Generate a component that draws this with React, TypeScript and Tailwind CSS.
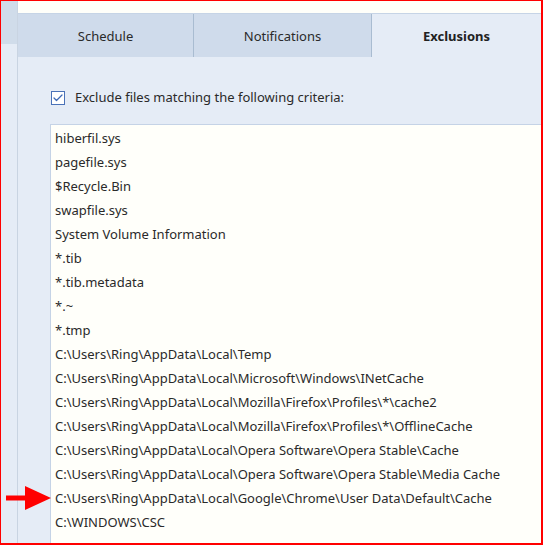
import { Check } from 'lucide-react'

const exclusions = [
  'hiberfil.sys',
  'pagefile.sys',
  '$Recycle.Bin',
  'swapfile.sys',
  'System Volume Information',
  '*.tib',
  '*.tib.metadata',
  '*.~',
  '*.tmp',
  'C:\\Users\\Ring\\AppData\\Local\\Temp',
  'C:\\Users\\Ring\\AppData\\Local\\Microsoft\\Windows\\INetCache',
  'C:\\Users\\Ring\\AppData\\Local\\Mozilla\\Firefox\\Profiles\\*\\cache2',
  'C:\\Users\\Ring\\AppData\\Local\\Mozilla\\Firefox\\Profiles\\*\\OfflineCache',
  'C:\\Users\\Ring\\AppData\\Local\\Opera Software\\Opera Stable\\Cache',
  'C:\\Users\\Ring\\AppData\\Local\\Opera Software\\Opera Stable\\Media Cache',
  'C:\\Users\\Ring\\AppData\\Local\\Google\\Chrome\\User Data\\Default\\Cache',
  'C:\\WINDOWS\\CSC',
]

const tabs = [
  { id: 'schedule', label: 'Schedule', width: 'w-[175px]' },
  { id: 'notifications', label: 'Notifications', width: 'w-[178px]' },
  { id: 'exclusions', label: 'Exclusions', width: 'flex-1', active: true },
]

function RedArrow() {
  return (
    <svg width="46" height="24" viewBox="0 0 46 24" className="absolute left-[5px] top-[485px]">
      <polygon points="0,9.5 19,9.5 19,0 45,12 19,24 19,14.5 0,14.5" fill="#ff0000" />
    </svg>
  )
}

export default function App() {
  return (
    <div
      className="relative w-[543px] h-[545px] overflow-hidden border-l border-t border-r-2 border-b-2 border-[#ff0000] flex bg-[#e5ecf6] text-[#2a2a2a]"
      style={{ fontFamily: '"Noto Sans", "Open Sans", sans-serif' }}
    >
      {/* left rail */}
      <div className="w-[17px] flex-shrink-0 flex flex-col border-r border-[#c9d4e2]">
        <div className="h-[43px] bg-[#d0dcea]" />
        <div className="flex-1 bg-[#e5ecf6]" />
      </div>

      <div className="flex-1 flex flex-col min-w-0">
        <div className="h-[12px] bg-[#fffffa]" />

        {/* tabs */}
        <div className="h-[44px] flex border-t border-[#c6d4e6]">
          {tabs.map((tab, i) => (
            <div
              key={tab.id}
              className={`${tab.width} flex items-center justify-center pt-[2px] text-[13px] ${
                tab.active ? 'bg-[#e5ecf6] font-bold text-[#222]' : 'bg-[#cfdbeb]'
              } ${i > 0 ? 'border-l border-[#a9bcd1]' : ''}`}
            >
              {tab.label}
            </div>
          ))}
        </div>

        {/* exclusions panel */}
        <div className="flex-1 flex flex-col pl-[32px] pt-[31px] min-h-0">
          <label className="flex items-center gap-[10px] pl-[1px] text-[13px]">
            <span className="w-[14px] h-[14px] border border-[#4a72b8] bg-white flex items-center justify-center">
              <Check className="w-[12px] h-[12px] text-[#3d69b5]" strokeWidth={2.5} />
            </span>
            Exclude files matching the following criteria:
          </label>

          <div className="mt-[16px] flex-1 border-l border-t border-[#c5d3e6] bg-[#fffffa] pt-[2px] pl-[4px]">
            {exclusions.map((item) => (
              <div key={item} className="h-[24px] flex items-center text-[13px] whitespace-nowrap">
                {item}
              </div>
            ))}
          </div>
        </div>
      </div>

      <RedArrow />
    </div>
  )
}
